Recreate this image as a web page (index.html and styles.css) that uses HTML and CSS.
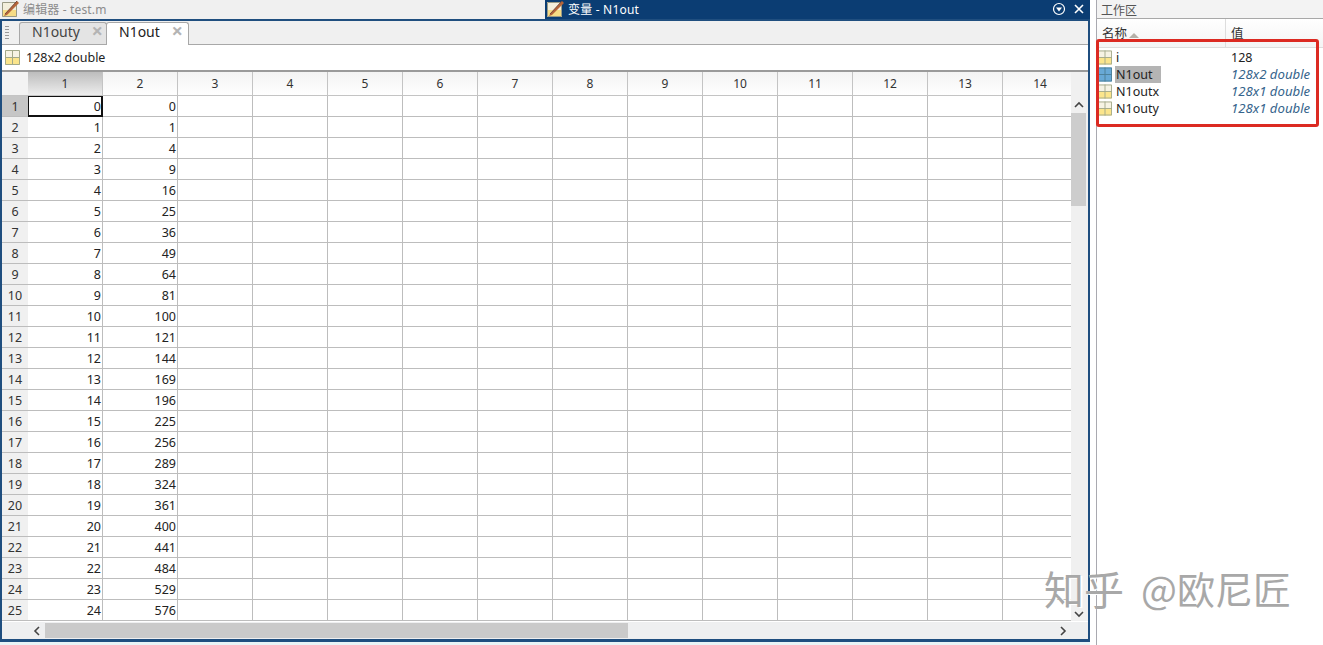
FILE: index.html
```html
<!DOCTYPE html>
<html lang="zh">
<head>
<meta charset="utf-8">
<title>变量 - N1out</title>
<link rel="stylesheet" href="styles.css">
</head>
<body>
<svg class="defs" width="0" height="0" aria-hidden="true">
  <symbol id="grid-y" viewBox="0 0 15 15">
    <rect x="0" y="0" width="15" height="7.5" fill="#f6f3e4"/>
    <rect x="0" y="7.5" width="15" height="7.5" fill="#fbe58c"/>
    <path d="M.5.5h14v14H.5zM7.5 0v15M0 7.5h15" fill="none" stroke="#a3a98a"/>
  </symbol>
  <symbol id="grid-b" viewBox="0 0 15 15">
    <rect width="15" height="15" fill="#68a9d6"/>
    <path d="M.5.5h14v14H.5zM7.5 0v15M0 7.5h15" fill="none" stroke="#4c7f98"/>
  </symbol>
  <symbol id="pencil" viewBox="0 0 17 17">
    <rect x="0" y="2" width="15" height="15" fill="#f3eedc"/>
    <rect x="0" y="10" width="15" height="7" fill="#f6dc85"/>
    <path d="M.5 2.5h14v14H.5z" fill="none" stroke="#9a9a86"/>
    <path d="M3 14 15 1l2 2L5 15l-3 1z" fill="#b5653a"/>
    <path d="M3 14 15 1" stroke="#77483a" fill="none"/>
  </symbol>
</svg>
<div class="app">
  <section class="main">
    <header class="titles">
      <div class="title-off">
        <svg class="ti"><use href="#pencil"/></svg>
        <span>编辑器 - test.m</span>
      </div>
      <div class="title-on">
        <svg class="ti"><use href="#pencil"/></svg>
        <span class="title-text">变量 - N1out</span>
        <svg class="tbtn" viewBox="0 0 14 14"><circle cx="7" cy="7" r="5.5" fill="none" stroke="#fff" stroke-width="1.2"/><path d="M4 5.5h6L7 9.5z" fill="#fff"/></svg>
        <svg class="tbtn" viewBox="0 0 14 14"><path d="M3 3l8 8M11 3l-8 8" stroke="#fff" stroke-width="1.6"/></svg>
      </div>
    </header>
    <div class="panel">
      <nav class="tabs">
        <span class="grip"></span>
        <div class="tab tab-back"><span>N1outy</span><i class="x">×</i></div>
        <div class="tab tab-front"><span>N1out</span><i class="x">×</i></div>
      </nav>
      <div class="info">
        <svg class="gi"><use href="#grid-y"/></svg>
        <span>128x2 double</span>
      </div>
      <div class="sheet">
        <div class="sheet-body">
          <div class="grid">
            <div class="colhead">
              <span class="corner"></span>
              <span class="ch ch-sel">1</span><span class="ch">2</span><span class="ch">3</span><span class="ch">4</span><span class="ch">5</span><span class="ch">6</span><span class="ch">7</span><span class="ch">8</span><span class="ch">9</span><span class="ch">10</span><span class="ch">11</span><span class="ch">12</span><span class="ch">13</span><span class="ch">14</span>
            </div>
            <div class="row"><span class="rh rh-sel">1</span><span class="c c-sel">0</span><span class="c">0</span></div>
            <div class="row"><span class="rh">2</span><span class="c">1</span><span class="c">1</span></div>
            <div class="row"><span class="rh">3</span><span class="c">2</span><span class="c">4</span></div>
            <div class="row"><span class="rh">4</span><span class="c">3</span><span class="c">9</span></div>
            <div class="row"><span class="rh">5</span><span class="c">4</span><span class="c">16</span></div>
            <div class="row"><span class="rh">6</span><span class="c">5</span><span class="c">25</span></div>
            <div class="row"><span class="rh">7</span><span class="c">6</span><span class="c">36</span></div>
            <div class="row"><span class="rh">8</span><span class="c">7</span><span class="c">49</span></div>
            <div class="row"><span class="rh">9</span><span class="c">8</span><span class="c">64</span></div>
            <div class="row"><span class="rh">10</span><span class="c">9</span><span class="c">81</span></div>
            <div class="row"><span class="rh">11</span><span class="c">10</span><span class="c">100</span></div>
            <div class="row"><span class="rh">12</span><span class="c">11</span><span class="c">121</span></div>
            <div class="row"><span class="rh">13</span><span class="c">12</span><span class="c">144</span></div>
            <div class="row"><span class="rh">14</span><span class="c">13</span><span class="c">169</span></div>
            <div class="row"><span class="rh">15</span><span class="c">14</span><span class="c">196</span></div>
            <div class="row"><span class="rh">16</span><span class="c">15</span><span class="c">225</span></div>
            <div class="row"><span class="rh">17</span><span class="c">16</span><span class="c">256</span></div>
            <div class="row"><span class="rh">18</span><span class="c">17</span><span class="c">289</span></div>
            <div class="row"><span class="rh">19</span><span class="c">18</span><span class="c">324</span></div>
            <div class="row"><span class="rh">20</span><span class="c">19</span><span class="c">361</span></div>
            <div class="row"><span class="rh">21</span><span class="c">20</span><span class="c">400</span></div>
            <div class="row"><span class="rh">22</span><span class="c">21</span><span class="c">441</span></div>
            <div class="row"><span class="rh">23</span><span class="c">22</span><span class="c">484</span></div>
            <div class="row"><span class="rh">24</span><span class="c">23</span><span class="c">529</span></div>
            <div class="row"><span class="rh">25</span><span class="c">24</span><span class="c">576</span></div>
          </div>
          <div class="vbar">
            <svg class="arrow-up" viewBox="0 0 10 7"><path d="M1 6l4-4 4 4" fill="none" stroke="#444" stroke-width="1.6"/></svg>
            <div class="vthumb"></div>
            <svg class="arrow-down" viewBox="0 0 10 7"><path d="M1 1l4 4 4-4" fill="none" stroke="#444" stroke-width="1.6"/></svg>
          </div>
        </div>
        <div class="hbar">
          <svg class="arrow-left" viewBox="0 0 7 10"><path d="M6 1L2 5l4 4" fill="none" stroke="#444" stroke-width="1.6"/></svg>
          <div class="hthumb"></div>
          <svg class="arrow-right" viewBox="0 0 7 10"><path d="M1 1l4 4-4 4" fill="none" stroke="#444" stroke-width="1.6"/></svg>
        </div>
      </div>
    </div>
  </section>
  <aside class="workspace">
    <div class="ws-title">工作区</div>
    <div class="ws-head">
      <span class="ws-name">名称<svg class="sort" viewBox="0 0 10 6"><path d="M0 6l5-5 5 5z" fill="#b5b0a8"/></svg></span>
      <span class="ws-val">值</span>
    </div>
    <div class="ws-list">
      <div class="ws-row"><svg class="gi-s"><use href="#grid-y"/></svg><span class="n">i</span><span class="v v-plain">128</span></div>
      <div class="ws-row"><svg class="gi-s"><use href="#grid-b"/></svg><span class="n"><span class="n-sel">N1out</span></span><span class="v">128x2 double</span></div>
      <div class="ws-row"><svg class="gi-s"><use href="#grid-y"/></svg><span class="n">N1outx</span><span class="v">128x1 double</span></div>
      <div class="ws-row"><svg class="gi-s"><use href="#grid-y"/></svg><span class="n">N1outy</span><span class="v">128x1 double</span></div>
    </div>
    <div class="redbox"></div>
  </aside>
  <div class="watermark"><span class="wm-a">知乎</span><span class="wm-b">@欧尼匠</span></div>
</div>
</body>
</html>
```
FILE: styles.css
```css
* { box-sizing: border-box; }
html, body { margin: 0; height: 100%; overflow: hidden; background: #fff; }
body { font-family: "Noto Sans", "Noto Sans CJK SC", sans-serif; font-size: 13px; color: #222; }
.defs { position: absolute; }

.app { position: relative; display: flex; width: 1323px; height: 645px; overflow: hidden; }

/* left column */
.main { width: 1090px; height: 645px; display: flex; flex-direction: column; background: #e9f4f6; padding-bottom: 3px; flex: none; }
.titles { display: flex; height: 19px; flex: none; }
.title-off { width: 545px; display: flex; align-items: center; gap: 4px; padding: 0 0 2px 2px; background: #f0f0f0; color: #8c8c8c; font-size: 12px; letter-spacing: .15px; }
.title-on { flex: 1; display: flex; align-items: center; gap: 4px; padding: 0 4px 2px 2px; background: #0b3d73; color: #fff; font-size: 12px; letter-spacing: .2px; }
.title-text { flex: 1; }
.ti { width: 17px; height: 17px; flex: none; }
.tbtn { width: 14px; height: 14px; flex: none; margin-left: 2px; }

.panel { flex: 1; min-height: 0; display: flex; flex-direction: column; border: 2px solid #1f4e7f; border-width: 2px 2px 3px 2px; background: #f0f0f0; }

.tabs { height: 24px; flex: none; display: flex; align-items: flex-end; background: #f0f0f0; border-bottom: 1px solid #a8a8a8; padding-left: 3px; }
.grip { width: 4px; height: 15px; margin: 0 10px 3px 0; background: repeating-linear-gradient(#999 0 1px, transparent 1px 3px); }
.tab { height: 23px; display: flex; align-items: center; justify-content: space-between; border: 1px solid #a8a8a8; border-bottom: 0; border-radius: 3px 3px 0 0; font-size: 14px; margin-bottom: -1px; padding-bottom: 6px; }
.tab-back { width: 88px; padding-left: 12px; padding-right: 3px; background: #e4e4e4; color: #444; height: 22px; margin-bottom: 0; padding-bottom: 5px; }
.tab-front { width: 83px; padding-left: 12px; padding-right: 5px; background: #fff; color: #222; margin-left: -1px; }
.x { font-style: normal; font-size: 20px; line-height: 1; color: #b4b4b4; font-weight: 700; }

.info { height: 27px; flex: none; display: flex; align-items: center; gap: 6px; padding-left: 3px; background: #fff; border-bottom: 2px solid #9a9a9a; font-size: 12.5px; }
.gi { width: 15px; height: 15px; }

.sheet { flex: 1; min-height: 0; display: flex; flex-direction: column; background: #fff; }
.sheet-body { flex: 1; min-height: 0; display: flex; }
.grid { flex: 1; min-width: 0; overflow: hidden; background: #fff; }

.colhead { display: flex; height: 24px; font-size: 12px; color: #333; background: linear-gradient(#f3f3f3, #fff); border-bottom: 1px solid #c4c4c4; }
.corner { width: 26px; flex: none; background: #f3f3f3; }
.ch { width: 75px; flex: none; display: flex; align-items: center; justify-content: center; border-right: 1px solid #c4c4c4; }
.ch-sel { background: linear-gradient(#bdbdbd, #ededed); }

.row { display: flex; height: 21px; font-size: 12.5px; line-height: 21px; border-bottom: 1px solid #bdbdbd;
  background: repeating-linear-gradient(90deg, transparent 0 74px, #bdbdbd 74px 75px) 26px 0 no-repeat, #fff; }
.rh { width: 26px; flex: none; text-align: center; background: #f0f0f0; color: #333; }
.rh-sel { background: #c6c6c6; }
.c { width: 75px; flex: none; text-align: right; padding-right: 1px; border-right: 1px solid #bdbdbd; }
.c-sel { border: 2px solid #111; border-width: 1px 2px 2px 1px; height: 21px; line-height: 19px; padding-right: 0; }

.vbar { width: 17px; flex: none; display: flex; flex-direction: column; align-items: center; background: #f0f0f0; position: relative; }
.arrow-up { width: 10px; height: 7px; margin: 29px 2px 5px 0; flex: none; }
.vthumb { width: 15px; height: 93px; align-self: flex-start; background: #cdcdcd; flex: none; }
.arrow-down { width: 10px; height: 7px; margin: auto 2px 3px 0; flex: none; }

.hbar { height: 18px; flex: none; display: flex; align-items: center; background: #eeeff0; padding-left: 31px; padding-right: 21px; border-top: 1px solid #fff; }
.arrow-left, .arrow-right { width: 7px; height: 10px; flex: none; }
.hthumb { width: 583px; height: 15px; background: #cacaca; margin-left: 5px; margin-right: auto; }

/* right column */
.workspace { position: relative; flex: 1; margin-left: 6px; border-left: 1px solid #a9a9b0; background: #fff; font-size: 12px; }
.ws-title { height: 19px; padding: 2px 0 0 4px; background: #f3f3f3; color: #555; line-height: 17px; border-bottom: 1px solid #a8a8a8; }
.ws-head { height: 29px; display: flex; background: linear-gradient(#fff, #f4f4f4); color: #333; border-bottom: 1px solid #ddd; font-size: 12.5px; overflow: hidden; }
.ws-name { width: 129px; padding: 7px 0 0 5px; border-right: 1px solid #ddd; line-height: 16px; }
.sort { width: 10px; height: 6px; margin-left: 2px; }
.ws-val { padding: 7px 0 0 5px; line-height: 16px; }
.ws-list { display: flex; flex-direction: column; padding-top: 1px; }
.ws-row { display: flex; align-items: center; height: 17px; padding-left: 1px; }
.gi-s { width: 14px; height: 15px; flex: none; }
.n { width: 119px; padding-left: 4px; flex: none; color: #222; font-size: 12.5px; }
.n-sel { display: inline-block; padding: 0 9px 0 1px; margin-left: -1px; background: #b4b4b4; height: 17px; line-height: 17px; }
.v { font-style: italic; color: #35648c; font-size: 13.2px; line-height: 17px; }
.v-plain { font-style: normal; color: #222; font-size: 12.5px; }
.redbox { position: absolute; left: -1px; top: 39px; width: 223px; height: 88px; border: 3px solid #dc2a22; border-radius: 3px; }

.watermark { position: absolute; left: 1044px; top: 561px; display: flex; gap: 17px; font-family: "Noto Sans CJK SC", sans-serif; line-height: 54px; color: #a8a8a8; white-space: nowrap; text-shadow: 2px 1px 0 #fff; }
.wm-a { font-size: 40px; }
.wm-b { font-size: 38px; }
```
